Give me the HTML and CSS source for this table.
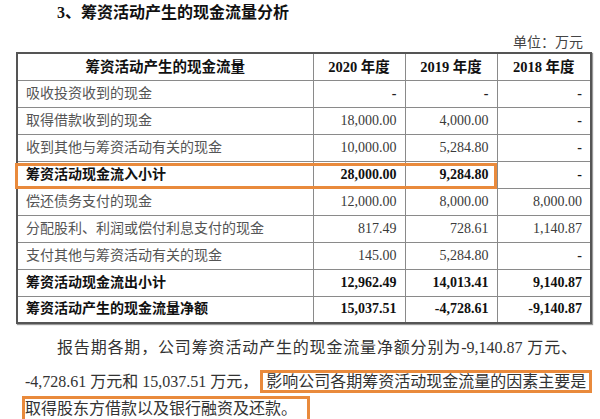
FILE: index.html
```html
<!DOCTYPE html>
<html lang="zh-CN">
<head>
<meta charset="utf-8">
<link rel="stylesheet" href="styles.css">
</head>
<body>
<div class="page">
  <h3 class="title">3、筹资活动产生的现金流量分析</h3>
  <div class="unit">单位：万元</div>
  <div class="table-wrap">
    <table class="cf">
      <colgroup>
        <col class="c-name"><col class="c-num"><col class="c-num"><col class="c-num3">
      </colgroup>
      <thead>
        <tr><th>筹资活动产生的现金流量</th><th>2020 年度</th><th>2019 年度</th><th>2018 年度</th></tr>
      </thead>
      <tbody>
        <tr><td>吸收投资收到的现金</td><td class="b">-</td><td class="b">-</td><td class="b">-</td></tr>
        <tr><td>取得借款收到的现金</td><td>18,000.00</td><td>4,000.00</td><td class="b">-</td></tr>
        <tr><td>收到其他与筹资活动有关的现金</td><td>10,000.00</td><td>5,284.80</td><td class="b">-</td></tr>
        <tr class="bold"><td>筹资活动现金流入小计</td><td>28,000.00</td><td>9,284.80</td><td>-</td></tr>
        <tr><td>偿还债务支付的现金</td><td>12,000.00</td><td>8,000.00</td><td>8,000.00</td></tr>
        <tr><td>分配股利、利润或偿付利息支付的现金</td><td>817.49</td><td>728.61</td><td>1,140.87</td></tr>
        <tr><td>支付其他与筹资活动有关的现金</td><td>145.00</td><td>5,284.80</td><td class="b">-</td></tr>
        <tr class="bold"><td>筹资活动现金流出小计</td><td>12,962.49</td><td>14,013.41</td><td>9,140.87</td></tr>
        <tr class="bold"><td>筹资活动产生的现金流量净额</td><td>15,037.51</td><td>-4,728.61</td><td>-9,140.87</td></tr>
      </tbody>
    </table>
    <div class="hl-row"></div>
  </div>
  <div class="para">
    <div class="line line1">报告期各期，公司筹资活动产生的现金流量净额分别为-9,140.87 万元、</div>
    <div class="line line2">-4,728.61 万元和 15,037.51 万元，<span class="box">影响公司各期筹资活动现金流量的因素主要是</span></div>
    <div class="line line3"><span class="box">取得股东方借款以及银行融资及还款。</span></div>
  </div>
</div>
</body>
</html>
```

FILE: styles.css
```css
html, body {
  margin: 0;
  padding: 0;
  background: #fff;
}
body {
  font-family: "Liberation Serif", "Noto Sans CJK SC", serif;
  color: #333;
  width: 600px;
  height: 419px;
  overflow: hidden;
}
.page {
  padding-top: 3px;
}
.title {
  margin: 0 0 0 57px;
  font-size: 16px;
  line-height: 20px;
  font-weight: bold;
  color: #111;
}
.unit {
  text-align: right;
  padding-right: 17px;
  margin-top: 12px;
  font-size: 14px;
  line-height: 16px;
  color: #444;
}
.table-wrap {
  position: relative;
  margin: 1px 0 0 16px;
  width: 577px;
}
.cf {
  border-collapse: collapse;
  table-layout: fixed;
  width: 576px;
  border: 2px solid #555;
  box-shadow: 1px 1px 1px #999;
}
.c-name { width: 296px; }
.c-num { width: 92px; }
.c-num3 { width: 94px; }
.cf th, .cf td {
  border: 1px solid #8a8a8a;
  height: 27px;
  padding: 0 8px;
  font-size: 14px;
  line-height: 16px;
  box-sizing: border-box;
}
.cf th {
  font-weight: bold;
  color: #111;
  text-align: center;
  font-size: 14.5px;
}
.cf td {
  text-align: right;
  color: #3a3a3a;
}
.cf td:first-child {
  text-align: left;
  color: #555;
}
.cf td.b {
  font-weight: bold;
  color: #222;
}
.cf tr.bold td {
  font-weight: bold;
  color: #111;
}
.hl-row {
  position: absolute;
  left: -1px;
  top: 111px;
  width: 482px;
  height: 26px;
  border: 3px solid #e98a3c;
  box-sizing: border-box;
}
.para {
  margin-top: 10px;
  padding-left: 25px;
  width: 560px;
  font-size: 16px;
  line-height: 27px;
  color: #333;
}
.line1 {
  text-indent: 32px;
  text-align: justify;
  text-align-last: justify;
  width: 552px;
  margin-bottom: 7px;
}
.line2 {
  white-space: nowrap;
}
.box {
  border: 3px solid #e98a3c;
  padding: 0 3px;
  margin-left: 2px;
}
.line3 .box {
  margin-left: -3px;
  padding: 1px 10px 10px 0;
}
```
